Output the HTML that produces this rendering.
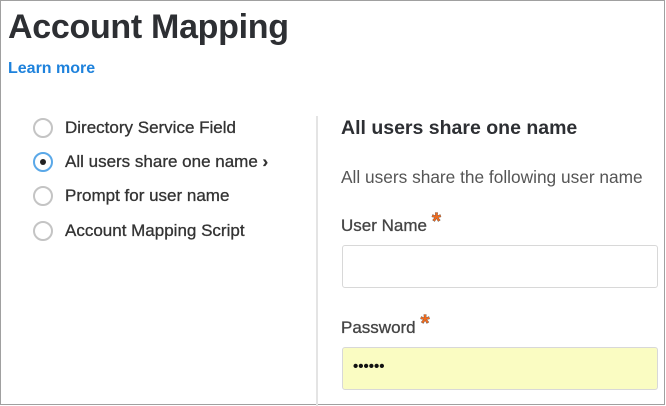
<!DOCTYPE html>
<html><head><style>
*{margin:0;padding:0;box-sizing:border-box}
body{width:666px;height:406px;overflow:hidden;background:#fff;font-family:"Liberation Sans",Arial,sans-serif;position:relative}
.frame{position:absolute;left:0;top:0;width:665px;height:405px;border:1px solid #a0a0a0}
.a{position:absolute;white-space:nowrap}
.r{position:absolute;left:33px;width:20px;height:20px;border:2px solid #c4c4c4;border-radius:50%}
.rl{position:absolute;left:65px;font-size:17px;color:#333;line-height:20px;-webkit-text-stroke:0.3px #333}
.inp{position:absolute;left:342px;width:316px;height:43px;border:1px solid #d8d8d8;border-radius:3px}
.star{color:#f26b1d;font-size:24px;font-weight:bold;position:relative;top:-2px}
</style></head><body>
<div class="frame"></div>
<div class="a" style="left:8px;top:8px;font-size:34px;font-weight:bold;color:#2d2f33;letter-spacing:-0.3px">Account Mapping</div>
<div class="a" style="left:8px;top:60px;font-size:16px;font-weight:bold;color:#1e82dc">Learn more</div>
<div class="r" style="top:118px"></div><div class="rl" style="top:118px">Directory Service Field</div>
<div class="r" style="top:152px;border-color:#5aa8e8"><div style="position:absolute;left:5px;top:5px;width:6px;height:6px;border-radius:50%;background:#222"></div></div>
<div class="rl" style="top:152px">All users share one name <span style="font-weight:bold;font-size:17px">&#8250;</span></div>
<div class="r" style="top:186px"></div><div class="rl" style="top:186px">Prompt for user name</div>
<div class="r" style="top:221px"></div><div class="rl" style="top:221px">Account Mapping Script</div>
<div class="a" style="left:316px;top:116px;width:2px;height:290px;background:#e4e4e4"></div>
<div class="a" style="left:341px;top:117px;font-size:19.5px;font-weight:bold;color:#2d2f33">All users share one name</div>
<div class="a" style="left:341px;top:167px;font-size:17.3px;color:#555">All users share the following user name</div>
<div class="a" style="left:341px;top:209px;font-size:17px;color:#444;line-height:30px;-webkit-text-stroke:0.3px #444">User Name <span class="star">*</span></div>
<div class="inp" style="top:245px"></div>
<div class="a" style="left:341px;top:311px;font-size:17px;color:#444;line-height:30px;-webkit-text-stroke:0.3px #444">Password <span class="star">*</span></div>
<div class="inp" style="top:347px;background:#fafcc2"></div>
<div class="a" style="left:353px;top:358px;font-size:15px;font-weight:bold;color:#111;letter-spacing:0px">••••••</div>
</body></html>
